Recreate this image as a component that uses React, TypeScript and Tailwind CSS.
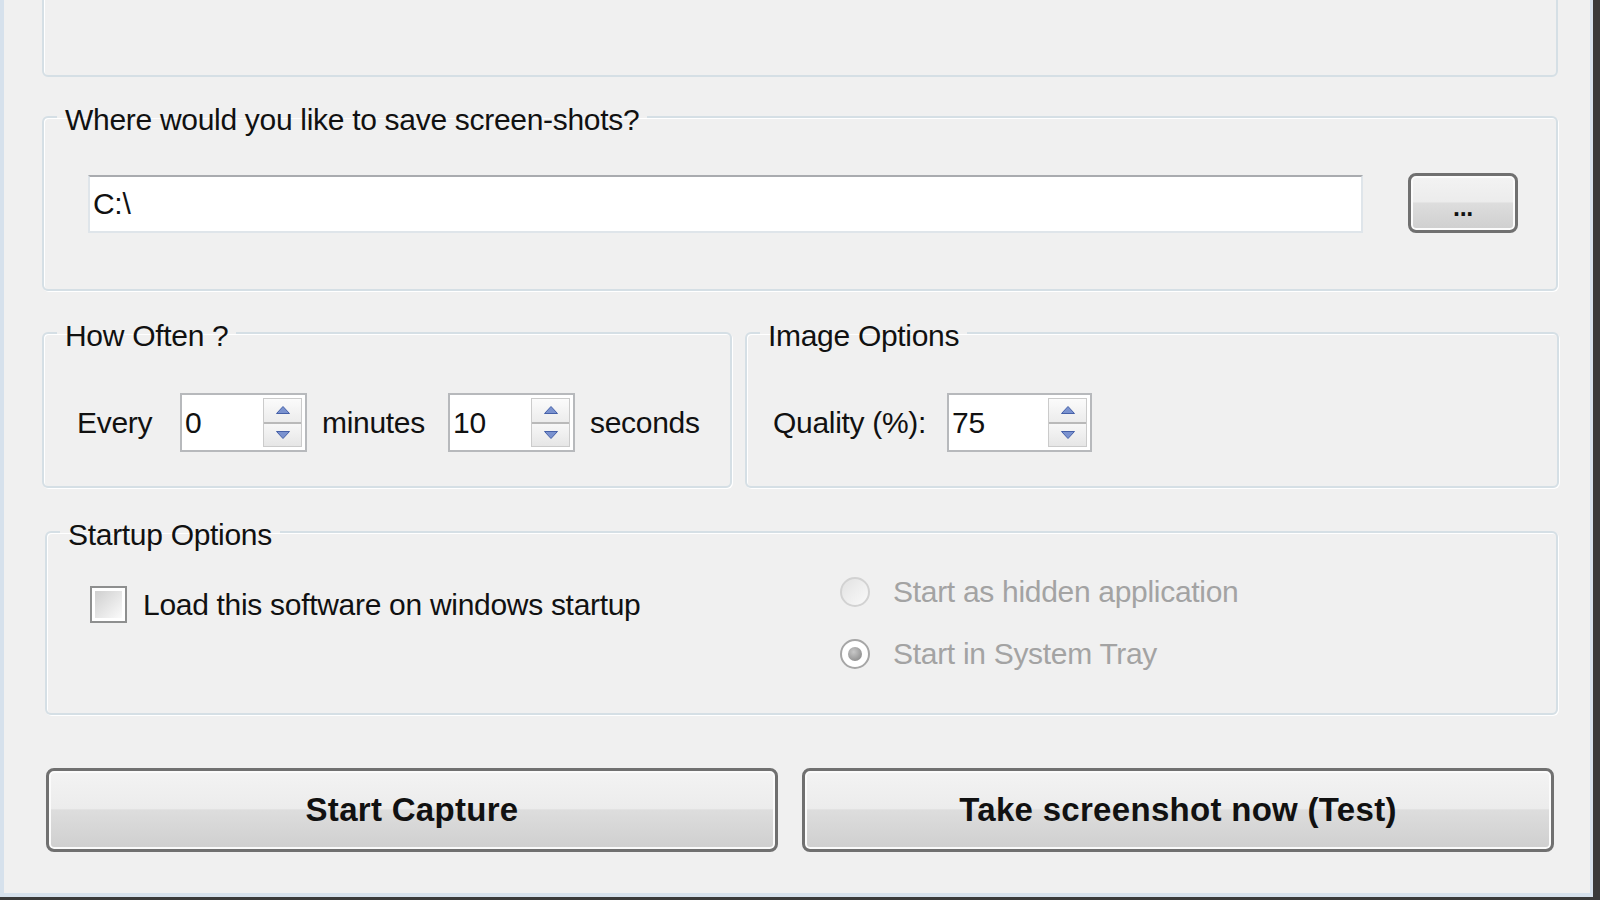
import type { ReactNode } from 'react';

function Group({ title, className, children }: { title: string; className: string; children?: ReactNode }) {
  return (
    <fieldset
      className={`box-border rounded-[6px] border-2 border-[#d5dfe5] shadow-[inset_1px_1px_0_#ffffff,1px_1px_0_#ffffff] ${className}`}
    >
      <legend className="ml-[13px] px-[8px] pt-[6px] text-[30px] leading-[36px] text-[#111]">{title}</legend>
      {children}
    </fieldset>
  );
}

function Arrow({ up }: { up?: boolean }) {
  return (
    <svg width="14" height="8" viewBox="0 0 14 8">
      <polygon
        points={up ? '7,0.5 13.5,7.5 0.5,7.5' : '0.5,0.5 13.5,0.5 7,7.5'}
        fill="#7a92cf"
        stroke="#4560a8"
        strokeWidth="1"
      />
    </svg>
  );
}

function Spin({ value, width }: { value: string; width: string }) {
  return (
    <div className={`flex h-[59px] ${width} border-2 border-[#b7b9bc] bg-white`}>
      <span className="flex-1 pl-[3px] text-[30px] leading-[55px] text-[#111]">{value}</span>
      <div className="my-[3px] mr-[3px] flex w-[39px] flex-col border border-[#cbcbcb]">
        <div className="flex flex-1 items-center justify-center border-b-2 border-[#b9b9b9] bg-gradient-to-b from-[#fbfbfb] to-[#ececec]">
          <Arrow up />
        </div>
        <div className="flex flex-1 items-center justify-center bg-gradient-to-b from-[#f7f7f7] to-[#e6e6e6]">
          <Arrow />
        </div>
      </div>
    </div>
  );
}

const btn =
  'rounded-[8px] border-[3px] border-[#707070] bg-[linear-gradient(#f3f3f3_0%,#ececec_48%,#dddddd_50%,#cfcfcf_100%)] shadow-[inset_0_0_0_2px_#fbfbfb] text-[#111]';

export default function App() {
  return (
    <div className="h-[900px] w-[1600px] overflow-hidden bg-[#3a3a3a] pr-[7px] pb-[3px] font-['Liberation_Sans',Arial,sans-serif] tracking-[-0.3px]">
      <div className="box-border h-full w-full border-b-[4px] border-l-[4px] border-r-[3px] border-[#d6e1ec] bg-[#f0f0f0] overflow-hidden">
        {/* cut-off group at the top */}
        <div className="mt-[-30px] ml-[38px] box-border h-[107px] w-[1516px] rounded-[6px] border-2 border-[#d5dfe5] shadow-[inset_1px_1px_0_#ffffff]" />

        {/* save location */}
        <Group title="Where would you like to save screen-shots?" className="mt-[19px] ml-[38px] h-[195px] w-[1516px]">
          <div className="flex items-end pt-[35px] pl-[44px] pr-[38px]">
            <div className="box-border h-[58px] flex-1 border-2 border-[#dfe5ea] border-t-[#a9abaf] bg-white pl-[3px] text-[30px] leading-[54px] text-[#111]">
              C:\
            </div>
            <button className={`ml-[45px] h-[60px] w-[110px] pt-[8px] text-[25px] font-bold leading-none text-[#3b3550] ${btn}`}>
              ...
            </button>
          </div>
        </Group>

        {/* timing + image options */}
        <div className="mt-[21px] ml-[38px] flex">
          <Group title="How Often ?" className="h-[176px] w-[690px]">
            <div className="flex items-center pt-[39px] pl-[33px] text-[30px] leading-[36px] text-[#111]">
              <span className="w-[103px]">Every</span>
              <Spin value="0" width="w-[127px]" />
              <span className="ml-[15px] w-[126px]">minutes</span>
              <Spin value="10" width="w-[127px]" />
              <span className="ml-[15px]">seconds</span>
            </div>
          </Group>
          <Group title="Image Options" className="ml-[13px] h-[176px] w-[814px]">
            <div className="flex items-center pt-[39px] pl-[26px] text-[30px] leading-[36px] text-[#111]">
              <span className="w-[174px]">Quality (%):</span>
              <Spin value="75" width="w-[145px]" />
            </div>
          </Group>
        </div>

        {/* startup */}
        <Group title="Startup Options" className="mt-[23px] ml-[41px] h-[204px] w-[1513px]">
          <div className="flex text-[30px] leading-[36px]">
            <div className="w-[793px] pt-[33px] pl-[43px]">
              <label className="flex items-center text-[#111]">
                <span className="box-border flex h-[37px] w-[37px] border-2 border-[#8e8f8f] bg-white p-[3px]">
                  <span className="h-full w-full bg-gradient-to-br from-[#cfcfcf] to-[#fbfbfb]" />
                </span>
                <span className="ml-[16px]">Load this software on windows startup</span>
              </label>
            </div>
            <div className="flex flex-col gap-[26px] pt-[21px] text-[#a3a3a3]">
              <div className="flex items-center">
                <span className="box-border h-[30px] w-[30px] rounded-full border-2 border-[#d2d2d2] bg-gradient-to-br from-[#e2e2e2] to-[#fafafa]" />
                <span className="ml-[23px]">Start as hidden application</span>
              </div>
              <div className="flex items-center">
                <span className="box-border flex h-[30px] w-[30px] items-center justify-center rounded-full border-2 border-[#a6a6a6] bg-white">
                  <span className="h-[14px] w-[14px] rounded-full bg-[radial-gradient(circle_at_40%_35%,#c8c8c8,#7f7f7f)]" />
                </span>
                <span className="ml-[23px]">Start in System Tray</span>
              </div>
            </div>
          </div>
        </Group>

        {/* actions */}
        <div className="mt-[53px] ml-[42px] flex">
          <button className={`box-border h-[84px] w-[732px] text-[33px] font-bold tracking-[0.3px] ${btn}`}>Start Capture</button>
          <button className={`ml-[24px] box-border h-[84px] w-[752px] text-[33px] font-bold tracking-[0.3px] ${btn}`}>
            Take screenshot now (Test)
          </button>
        </div>
      </div>
    </div>
  );
}
